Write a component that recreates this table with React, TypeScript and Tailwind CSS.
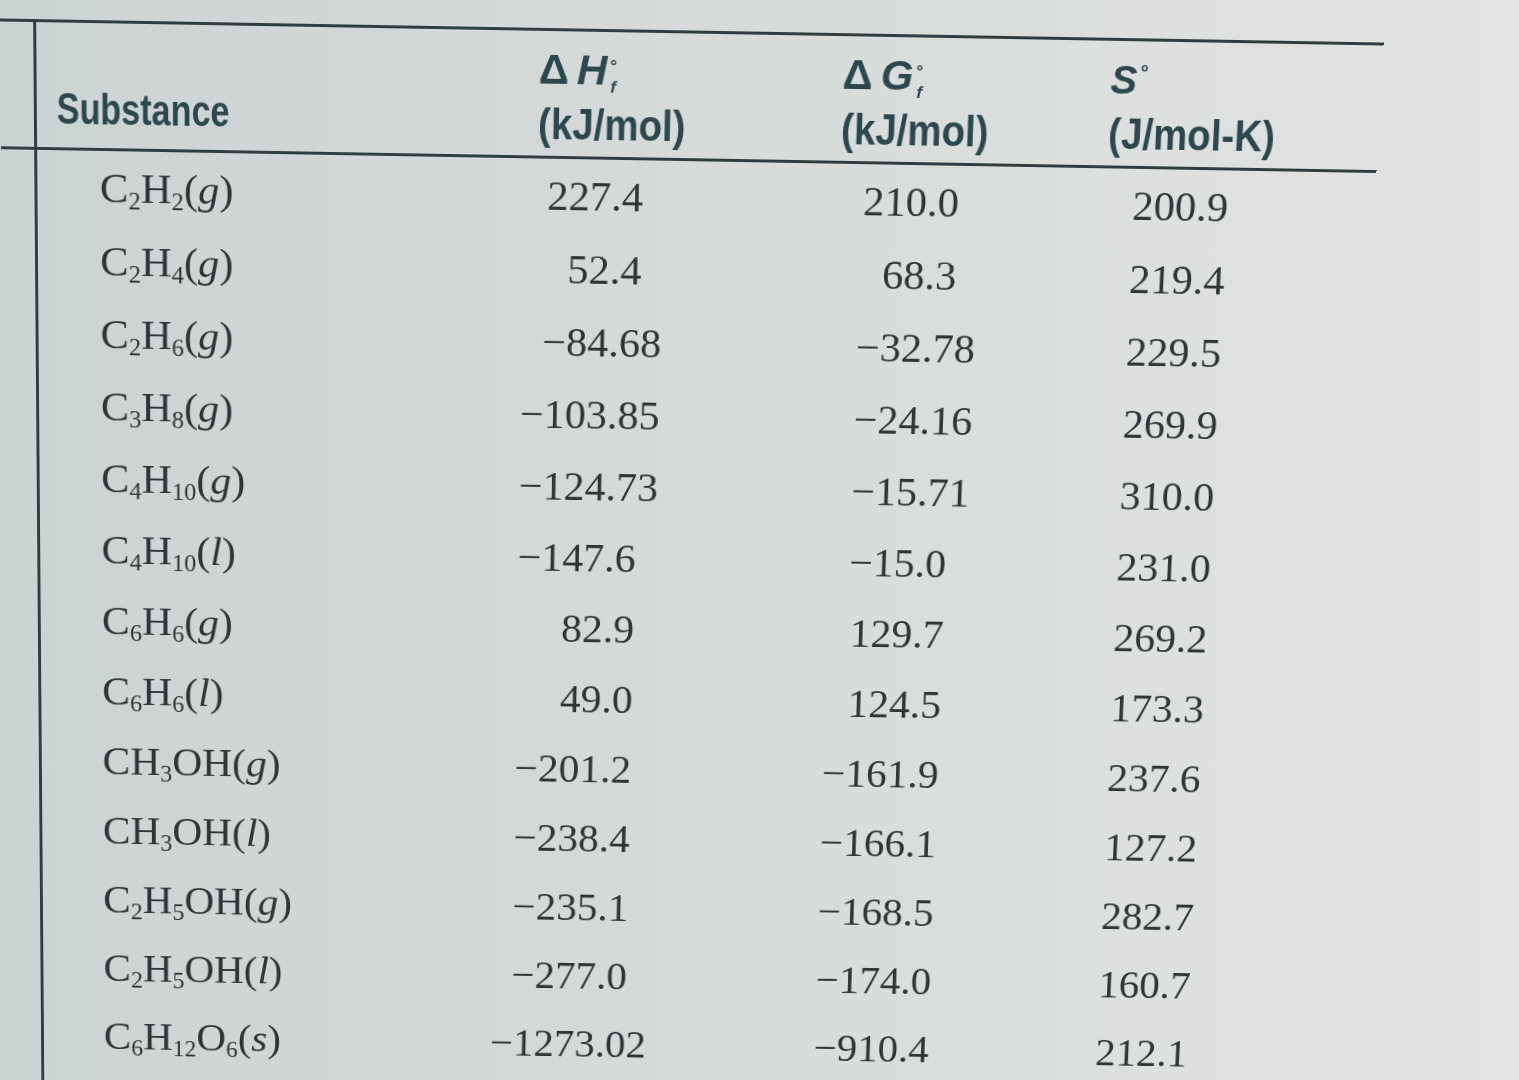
import React from "react";

type Row = { f: string; phase: string; h: string; g: string; s: string };

const rows: Row[] = [
  { f: "C_2H_2", phase: "g", h: "227.4", g: "210.0", s: "200.9" },
  { f: "C_2H_4", phase: "g", h: "52.4", g: "68.3", s: "219.4" },
  { f: "C_2H_6", phase: "g", h: "−84.68", g: "−32.78", s: "229.5" },
  { f: "C_3H_8", phase: "g", h: "−103.85", g: "−24.16", s: "269.9" },
  { f: "C_4H_10", phase: "g", h: "−124.73", g: "−15.71", s: "310.0" },
  { f: "C_4H_10", phase: "l", h: "−147.6", g: "−15.0", s: "231.0" },
  { f: "C_6H_6", phase: "g", h: "82.9", g: "129.7", s: "269.2" },
  { f: "C_6H_6", phase: "l", h: "49.0", g: "124.5", s: "173.3" },
  { f: "CH_3OH", phase: "g", h: "−201.2", g: "−161.9", s: "237.6" },
  { f: "CH_3OH", phase: "l", h: "−238.4", g: "−166.1", s: "127.2" },
  { f: "C_2H_5OH", phase: "g", h: "−235.1", g: "−168.5", s: "282.7" },
  { f: "C_2H_5OH", phase: "l", h: "−277.0", g: "−174.0", s: "160.7" },
  { f: "C_6H_12O_6", phase: "s", h: "−1273.02", g: "−910.4", s: "212.1" },
];

// "C_2H_5OH" -> C, sub 2, H, sub 5, OH
function Formula({ f, phase }: { f: string; phase: string }) {
  const parts = f.split(/_(\d+)/);
  return (
    <span className="whitespace-nowrap">
      {parts.map((p, i) =>
        i % 2 === 1 ? (
          <span key={i} className="relative top-[0.28em] text-[0.58em]">
            {p}
          </span>
        ) : (
          <span key={i}>{p}</span>
        )
      )}
      (<span className="italic">{phase}</span>)
    </span>
  );
}

function Num({ v, intClass }: { v: string; intClass: string }) {
  const dot = v.indexOf(".");
  return (
    <div className="flex">
      <span className={intClass + " shrink-0 text-right"}>{v.slice(0, dot)}</span>
      <span>{v.slice(dot)}</span>
    </div>
  );
}

function DeltaHead({ letter }: { letter: string }) {
  return (
    <div className="flex h-[55px] items-center text-[42px]">
      <span className="mr-[8px] font-semibold">Δ</span>
      <span className="italic">{letter}</span>
      <span className="ml-[3px] mt-[12px] flex flex-col items-center text-[17px] leading-[21px]">
        <span>°</span>
        <span className="italic">f</span>
      </span>
    </div>
  );
}

function Units({ t }: { t: string }) {
  return (
    <div className="flex h-[55px] items-center text-[44px]">
      <span className="inline-block origin-left scale-x-[0.88] whitespace-nowrap">{t}</span>
    </div>
  );
}

export default function App() {
  return (
    <div className="h-[1080px] w-full overflow-hidden bg-linear-to-r from-[#ccd3d3] via-[#d7dbda] to-[#e1e4e3]">
      <div className="origin-[200px_0px] pt-[22px] [transform:perspective(1200px)_rotateX(-3.2deg)_skewY(1deg)]">
        <div className="w-[1386px] border-t-[3px] border-[#2f3c40]">
          {/* header */}
          <div className="flex h-[129px] border-b-[3px] border-[#2f3c40] font-['Liberation_Sans',Arial,sans-serif] font-bold text-[#2c474e]">
            <div className="w-[33px] shrink-0" />
            <div className="w-[444px] shrink-0 border-l-[3px] border-[#2f3c40] pl-[20px] pt-[59px]">
              <div className="flex h-[55px] items-center text-[44px]">
                <span className="inline-block origin-left scale-x-[0.78]">Substance</span>
              </div>
            </div>
            <div className="w-[300px] shrink-0 pl-[63px] pt-[11px]">
              <DeltaHead letter="H" />
              <Units t="(kJ/mol)" />
            </div>
            <div className="w-[280px] shrink-0 pl-[68px] pt-[11px]">
              <DeltaHead letter="G" />
              <Units t="(kJ/mol)" />
            </div>
            <div className="flex-1 pl-[57px] pt-[11px]">
              <div className="flex h-[55px] items-center text-[40px]">
                <span className="italic">S</span>
                <span className="-mt-[16px] ml-[3px] text-[20px]">°</span>
              </div>
              <Units t="(J/mol-K)" />
            </div>
          </div>

          {/* body */}
          <div className="font-['Liberation_Serif',serif] text-[43px] leading-none text-[#2f3537]">
            {rows.map((r, i) => (
              <div key={i} className="flex h-[75px]">
                <div className="w-[33px] shrink-0" />
                <div className="flex w-[444px] shrink-0 items-center border-l-[3px] border-[#2f3c40] pl-[63px]">
                  <Formula f={r.f} phase={r.phase} />
                </div>
                <div className="flex w-[300px] shrink-0 items-center">
                  <Num v={r.h} intClass="w-[138px]" />
                </div>
                <div className="flex w-[280px] shrink-0 items-center">
                  <Num v={r.g} intClass="w-[157px]" />
                </div>
                <div className="flex flex-1 items-center">
                  <Num v={r.s} intClass="w-[149px]" />
                </div>
              </div>
            ))}
            <div className="flex h-[80px]">
              <div className="w-[33px] shrink-0" />
              <div className="w-[444px] shrink-0 border-l-[3px] border-[#2f3c40]" />
            </div>
          </div>
        </div>
      </div>
    </div>
  );
}
